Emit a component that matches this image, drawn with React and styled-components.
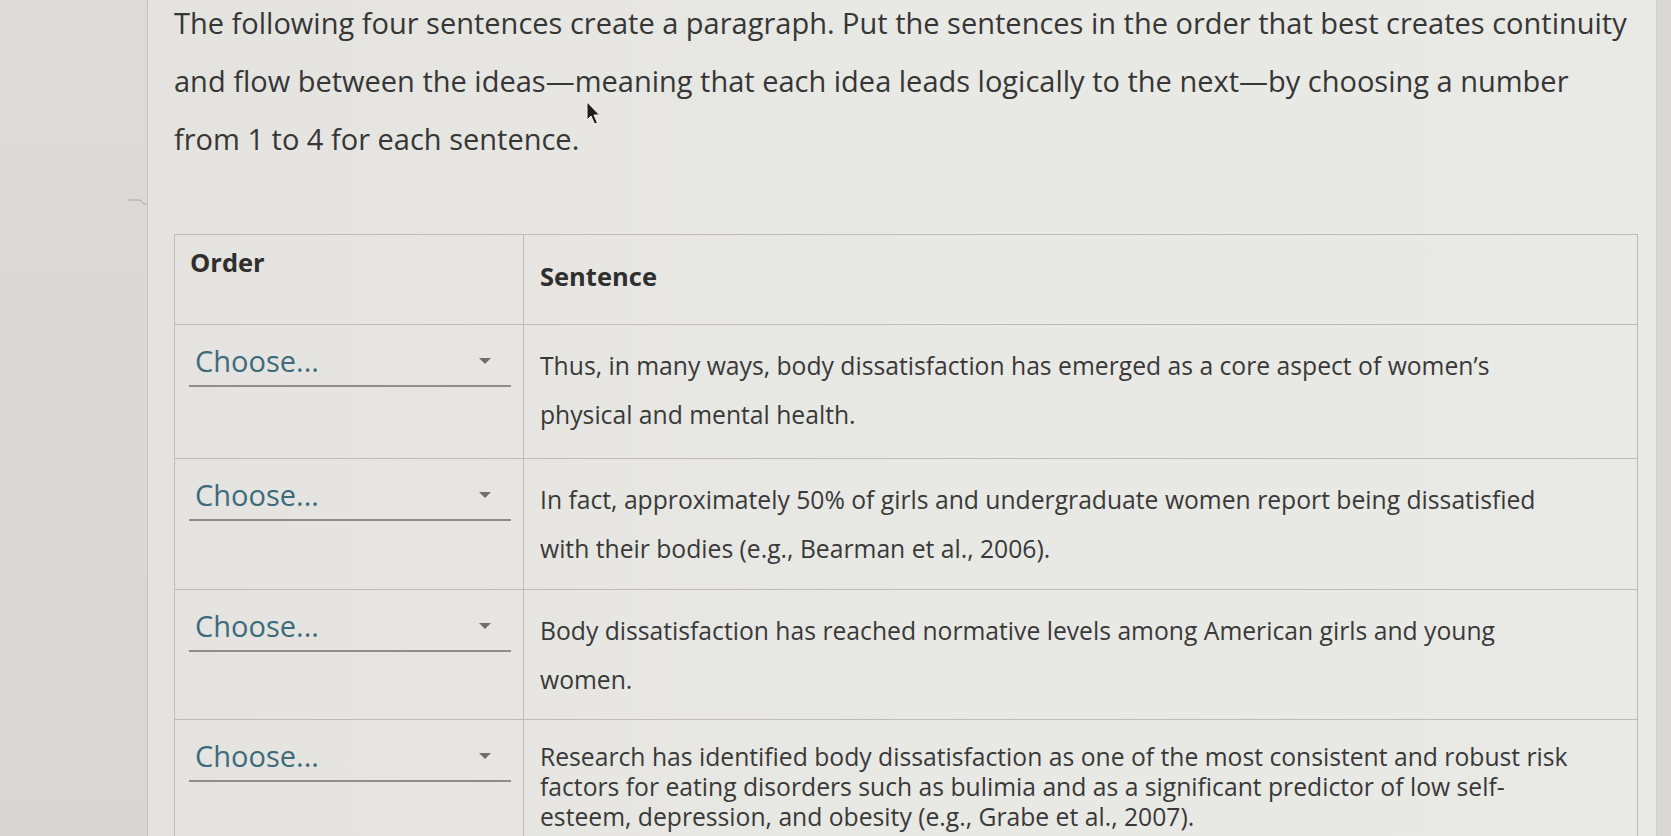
import React from "react";
import styled, { createGlobalStyle } from "styled-components";

const Global = createGlobalStyle`
  html, body { margin: 0; padding: 0; }
  body {
    background: #d9d8d4;
    font-family: "Open Sans", "Noto Sans", sans-serif;
    color: #3b3b3b;
    overflow: hidden;
  }
`;

const Page = styled.div`
  display: flex;
  width: 1671px;
  height: 836px;
  overflow: hidden;
`;

const Gutter = styled.aside`
  position: relative;
  flex: 0 0 147px;
  background: linear-gradient(180deg, #dcdbd7 0%, #d8d7d3 100%);
`;

const Tick = styled.svg`
  position: absolute;
  left: 127px;
  top: 197px;
`;

const Panel = styled.main`
  position: relative;
  flex: 1;
  border-left: 1px solid #c4c3bf;
  border-right: 1px solid #cfcecb;
  margin-right: 14px;
  background: linear-gradient(90deg, #e4e3df 0%, #e8e8e4 50%, #e9e9e6 100%);
  padding: 0 0 0 26px;
`;

const Prompt = styled.p`
  margin: -6px 0 0 0;
  width: 1466px;
  font-size: 29px;
  line-height: 58px;
  color: #363636;
`;

const Table = styled.table`
  margin-top: 66px;
  width: 1464px;
  border-collapse: collapse;
  table-layout: fixed;
`;

const HeadCell = styled.th`
  text-align: left;
  font-weight: 700;
  font-size: 25.5px;
  color: #2f2f2f;
  border: 1.5px solid #bdbcb8;
  height: 90px;
  box-sizing: border-box;
  vertical-align: top;
  padding: ${(p) => (p.$low ? "24px 16px 0" : "10px 15px 0")};
  width: ${(p) => p.$w || "auto"};
`;

const Cell = styled.td`
  border: 1.5px solid #bdbcb8;
  vertical-align: top;
  height: ${(p) => p.$h}px;
  box-sizing: border-box;
  padding: ${(p) => p.$pad};
`;

const Select = styled.div`
  display: flex;
  align-items: flex-start;
  justify-content: space-between;
  height: 48px;
  box-sizing: border-box;
  padding: 0 20px 0 6px;
  border-bottom: 2.5px solid #8e8d89;
  color: #3d6b7c;
  font-size: 29px;
  line-height: 44px;
`;

const Caret = styled.span`
  margin-top: 19px;
  width: 0;
  height: 0;
  border-left: 6px solid transparent;
  border-right: 6px solid transparent;
  border-top: 6px solid #6f6f6f;
`;

const Sentence = styled.div`
  max-width: 1040px;
  font-size: 24.7px;
  line-height: ${(p) => (p.$tight ? "30px" : "49px")};
  color: #393939;
`;

const Pointer = styled.svg`
  position: absolute;
  left: 438px;
  top: 101px;
`;

const rows = [
  {
    text: "Thus, in many ways, body dissatisfaction has emerged as a core aspect of women’s physical and mental health.",
    h: 134,
  },
  {
    text: "In fact, approximately 50% of girls and undergraduate women report being dissatisfied with their bodies (e.g., Bearman et al., 2006).",
    h: 131,
  },
  {
    text: "Body dissatisfaction has reached normative levels among American girls and young women.",
    h: 130,
  },
  {
    text: "Research has identified body dissatisfaction as one of the most consistent and robust risk factors for eating disorders such as bulimia and as a significant predictor of low self-esteem, depression, and obesity (e.g., Grabe et al., 2007).",
    h: 140,
    tight: true,
  },
];

export default function App() {
  return (
    <>
      <Global />
      <Page>
        <Gutter>
          <Tick width="20" height="10" viewBox="0 0 20 10">
            <path d="M1 3 L13 3 L17 7 L20 7" fill="none" stroke="#a6a5a1" strokeWidth="1" />
          </Tick>
        </Gutter>
        <Panel>
          <Prompt>
            The following four sentences create a paragraph. Put the sentences in the order that best creates continuity and flow between the ideas—meaning that each idea leads logically to the next—by choosing a number from 1 to 4 for each sentence.
          </Prompt>
          <Pointer width="16" height="26" viewBox="0 0 16 26">
            <path d="M1 1 L1 19 L5 15 L8.5 23 L11.5 22 L8 14 L13.5 14 Z" fill="#1e1e1e" stroke="#f4f4f2" strokeWidth="1" />
          </Pointer>
          <Table>
            <thead>
              <tr>
                <HeadCell $w="349px">Order</HeadCell>
                <HeadCell $low>Sentence</HeadCell>
              </tr>
            </thead>
            <tbody>
              {rows.map((r, i) => (
                <tr key={i}>
                  <Cell $h={r.h} $pad="14px 12px 0 14px">
                    <Select>
                      <span>Choose...</span>
                      <Caret />
                    </Select>
                  </Cell>
                  <Cell $h={r.h} $pad={r.tight ? "22px 16px 0" : "16px 16px 0"}>
                    <Sentence $tight={r.tight}>{r.text}</Sentence>
                  </Cell>
                </tr>
              ))}
            </tbody>
          </Table>
        </Panel>
      </Page>
    </>
  );
}
